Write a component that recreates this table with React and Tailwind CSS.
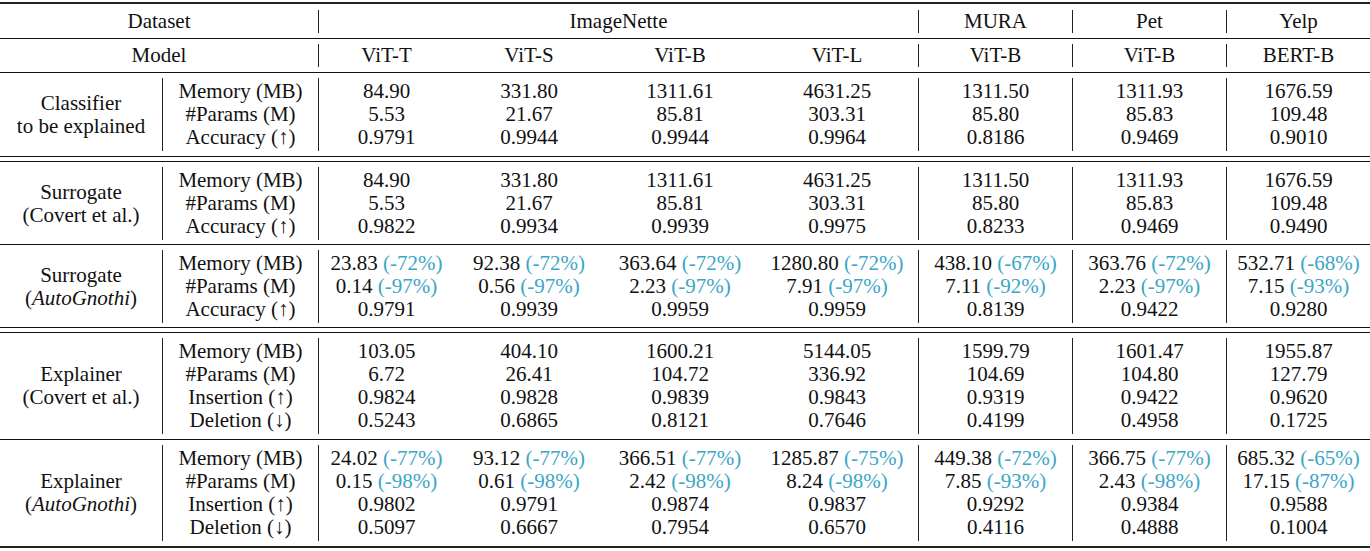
const cols = [
  { w: "w-[136px]", line: true },
  { w: "w-[150px]", line: false },
  { w: "w-[152px]", line: false },
  { w: "w-[162px]", line: false },
  { w: "w-[154px]", line: true },
  { w: "w-[154px]", line: true },
  { w: "w-[144px]", line: true },
];

const sections = [
  {
    group: ["Classifier", "to be explained"],
    metrics: ["Memory (MB)", "#Params (M)", "Accuracy (↑)"],
    values: [
      ["84.90", "331.80", "1311.61", "4631.25", "1311.50", "1311.93", "1676.59"],
      ["5.53", "21.67", "85.81", "303.31", "85.80", "85.83", "109.48"],
      ["0.9791", "0.9944", "0.9944", "0.9964", "0.8186", "0.9469", "0.9010"],
    ],
    pad: "py-[5px]",
  },
  {
    double: true,
    group: ["Surrogate", "(Covert et al.)"],
    metrics: ["Memory (MB)", "#Params (M)", "Accuracy (↑)"],
    values: [
      ["84.90", "331.80", "1311.61", "4631.25", "1311.50", "1311.93", "1676.59"],
      ["5.53", "21.67", "85.81", "303.31", "85.80", "85.83", "109.48"],
      ["0.9822", "0.9934", "0.9939", "0.9975", "0.8233", "0.9469", "0.9490"],
    ],
    pad: "pt-[5px] pb-[4px]",
  },
  {
    group: ["Surrogate", "italic"],
    metrics: ["Memory (MB)", "#Params (M)", "Accuracy (↑)"],
    values: [
      [["23.83", "-72%"], ["92.38", "-72%"], ["363.64", "-72%"], ["1280.80", "-72%"], ["438.10", "-67%"], ["363.76", "-72%"], ["532.71", "-68%"]],
      [["0.14", "-97%"], ["0.56", "-97%"], ["2.23", "-97%"], ["7.91", "-97%"], ["7.11", "-92%"], ["2.23", "-97%"], ["7.15", "-93%"]],
      ["0.9791", "0.9939", "0.9959", "0.9959", "0.8139", "0.9422", "0.9280"],
    ],
    pad: "pt-[5px] pb-[4px]",
  },
  {
    double: true,
    group: ["Explainer", "(Covert et al.)"],
    metrics: ["Memory (MB)", "#Params (M)", "Insertion (↑)", "Deletion (↓)"],
    values: [
      ["103.05", "404.10", "1600.21", "5144.05", "1599.79", "1601.47", "1955.87"],
      ["6.72", "26.41", "104.72", "336.92", "104.69", "104.80", "127.79"],
      ["0.9824", "0.9828", "0.9839", "0.9843", "0.9319", "0.9422", "0.9620"],
      ["0.5243", "0.6865", "0.8121", "0.7646", "0.4199", "0.4958", "0.1725"],
    ],
    pad: "py-[5px]",
  },
  {
    group: ["Explainer", "italic"],
    metrics: ["Memory (MB)", "#Params (M)", "Insertion (↑)", "Deletion (↓)"],
    values: [
      [["24.02", "-77%"], ["93.12", "-77%"], ["366.51", "-77%"], ["1285.87", "-75%"], ["449.38", "-72%"], ["366.75", "-77%"], ["685.32", "-65%"]],
      [["0.15", "-98%"], ["0.61", "-98%"], ["2.42", "-98%"], ["8.24", "-98%"], ["7.85", "-93%"], ["2.43", "-98%"], ["17.15", "-87%"]],
      ["0.9802", "0.9791", "0.9874", "0.9837", "0.9292", "0.9384", "0.9588"],
      ["0.5097", "0.6667", "0.7954", "0.6570", "0.4116", "0.4888", "0.1004"],
    ],
    pad: "py-[5px]",
  },
];

const Cell = ({ v }) =>
  Array.isArray(v) ? (
    <div>
      {v[0]} <span className="text-[#3ba6c6]">({v[1]})</span>
    </div>
  ) : (
    <div>{v}</div>
  );

const Section = ({ s, last }) => (
  <div className={`flex ${s.pad} ${last ? "" : "border-b border-[#111]"}`}>
    <div className="w-[162px] flex flex-col justify-center items-center">
      <div>{s.group[0]}</div>
      {s.group[1] === "italic" ? (
        <div>
          (<span className="italic">AutoGnothi</span>)
        </div>
      ) : (
        <div>{s.group[1]}</div>
      )}
    </div>
    <div className="w-[156px] border-l border-[#222] py-[2px] text-center">
      {s.metrics.map((m) => (
        <div key={m}>{m}</div>
      ))}
    </div>
    {cols.map((c, ci) => (
      <div
        key={ci}
        className={`${c.w} py-[2px] text-center ${c.line ? "border-l border-[#222]" : ""}`}
      >
        {s.values.map((row, ri) => (
          <Cell key={ri} v={row[ci]} />
        ))}
      </div>
    ))}
  </div>
);

export default function App() {
  return (
    <div className="bg-white w-[1370px] h-[551px] pt-[2px] text-[#111] text-[21px] leading-[23px] [font-family:'Liberation_Serif','Times_New_Roman',serif]">
      <div className="border-t-2 border-b-2 border-[#222]">
        <div className="flex pt-[6px] pb-[5px] border-b border-[#111]">
          <div className="w-[318px] text-center">Dataset</div>
          <div className="w-[600px] text-center border-l border-[#222]">ImageNette</div>
          <div className="w-[154px] text-center border-l border-[#222]">MURA</div>
          <div className="w-[154px] text-center border-l border-[#222]">Pet</div>
          <div className="w-[144px] text-center border-l border-[#222]">Yelp</div>
        </div>
        <div className="flex py-[5px] border-b border-[#111]">
          <div className="w-[318px] text-center">Model</div>
          {["ViT-T", "ViT-S", "ViT-B", "ViT-L", "ViT-B", "ViT-B", "BERT-B"].map((m, i) => (
            <div
              key={i}
              className={`${cols[i].w} text-center ${cols[i].line ? "border-l border-[#222]" : ""}`}
            >
              {m}
            </div>
          ))}
        </div>
        {sections.map((s, i) => (
          <div key={i}>
            {s.double && <div className="h-[5px] border-b border-[#111]" />}
            <Section s={s} last={i === sections.length - 1} />
          </div>
        ))}
      </div>
    </div>
  );
}
